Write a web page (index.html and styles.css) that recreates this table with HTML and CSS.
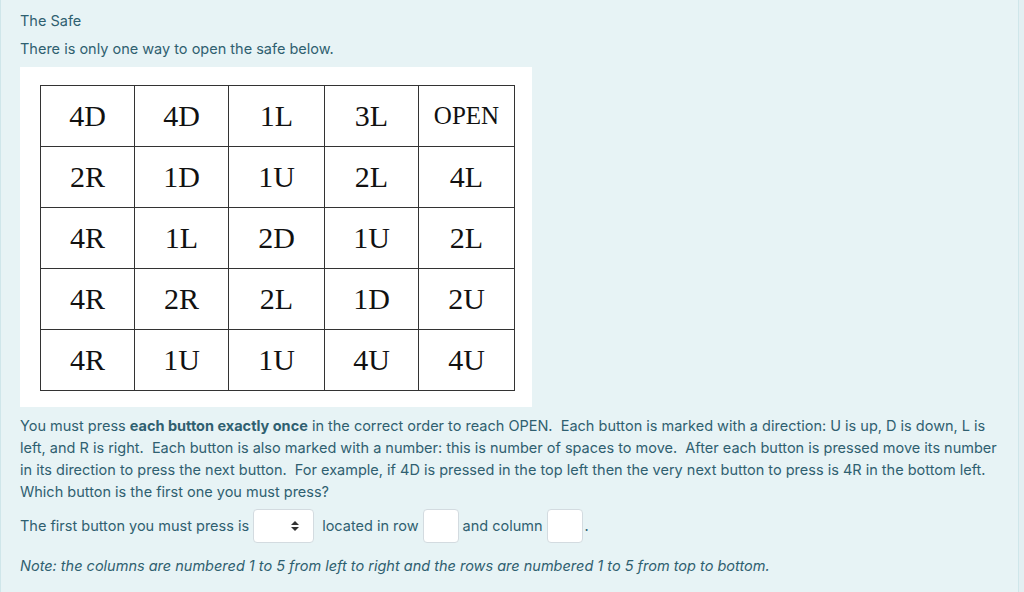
FILE: index.html
```html
<!DOCTYPE html>
<html>
<head>
<meta charset="utf-8">
<link rel="stylesheet" href="styles.css">
</head>
<body>
<div class="formulation">
  <p class="title">The Safe</p>
  <p class="intro">There is only one way to open the safe below.</p>
  <div class="picture">
    <table class="safe">
      <tr><td>4D</td><td>4D</td><td class="wide">1L</td><td>3L</td><td class="wide open">OPEN</td></tr>
      <tr><td>2R</td><td>1D</td><td class="wide">1U</td><td>2L</td><td class="wide">4L</td></tr>
      <tr><td>4R</td><td>1L</td><td class="wide">2D</td><td>1U</td><td class="wide">2L</td></tr>
      <tr><td>4R</td><td>2R</td><td class="wide">2L</td><td>1D</td><td class="wide">2U</td></tr>
      <tr><td>4R</td><td>1U</td><td class="wide">1U</td><td>4U</td><td class="wide">4U</td></tr>
    </table>
  </div>
  <p class="para">You must press <strong>each button exactly once</strong> in the correct order to reach OPEN.&nbsp; Each button is marked with a direction: U is up, D is down, L is left, and R is right.&nbsp; Each button is also marked with a number: this is number of spaces to move.&nbsp; After each button is pressed move its number in its direction to press the next button.&nbsp; For example, if 4D is pressed in the top left then the very next button to press is 4R in the bottom left.&nbsp; Which button is the first one you must press?</p>
  <div class="answer">
    <span>The first button you must press is</span>
    <span class="select"><span class="arrows"><span class="up"></span><span class="down"></span></span></span>
    <span>located in row</span>
    <span class="box"></span>
    <span>and column</span>
    <span class="box"></span><span class="dot">.</span>
  </div>
  <p class="note">Note: the columns are numbered 1 to 5 from left to right and the rows are numbered 1 to 5 from top to bottom.</p>
</div>
</body>
</html>
```
FILE: styles.css
```css
html, body {
  margin: 0;
  padding: 0;
}
body {
  background: #e3eff2;
  width: 1024px;
  height: 592px;
  overflow: hidden;
}
.formulation {
  width: 1019px;
  height: 592px;
  box-sizing: border-box;
  background: #e7f3f5;
  border-left: 1px solid #cfe6ea;
  border-right: 1px solid #cfe6ea;
  padding: 10px 0 0 19px;
  color: #2f6070;
  font-family: Inter, "Open Sans", sans-serif;
  font-size: 14.5px;
  line-height: 22px;
}
p {
  margin: 0;
}
.title {
  margin-bottom: 6px;
}
.intro {
  margin-bottom: 7px;
}
.picture {
  width: 512px;
  height: 340px;
  background: #fff;
  box-sizing: border-box;
  padding: 18px 0 0 20px;
}
.safe {
  border-collapse: collapse;
  table-layout: fixed;
  font-family: "Liberation Serif", "Times New Roman", serif;
  font-size: 30px;
  color: #111;
}
.safe td {
  border: 1.5px solid #333;
  width: 93px;
  height: 60px;
  padding: 0;
  text-align: center;
  vertical-align: middle;
}
.safe td.wide {
  width: 95px;
}
.safe td.open {
  font-size: 25px;
}
.para {
  margin-top: 8px;
  width: 985px;
}
strong {
  font-weight: 700;
}
.answer {
  display: flex;
  align-items: center;
  gap: 4px;
  margin-top: 6px;
  height: 34px;
}
.select {
  width: 61px;
  height: 34px;
  background: #fff;
  border: 1px solid #d3dbe0;
  border-radius: 4px;
  display: flex;
  align-items: center;
  justify-content: flex-end;
  padding-right: 14px;
  box-sizing: border-box;
  margin-right: 4px;
}
.arrows {
  display: flex;
  flex-direction: column;
  gap: 2px;
}
.up {
  width: 0;
  height: 0;
  border-left: 4px solid transparent;
  border-right: 4px solid transparent;
  border-bottom: 4px solid #333;
}
.down {
  width: 0;
  height: 0;
  border-left: 4px solid transparent;
  border-right: 4px solid transparent;
  border-top: 4px solid #333;
}
.box {
  width: 36px;
  height: 34px;
  box-sizing: border-box;
  background: #fff;
  border: 1px solid #d3dbe0;
  border-radius: 4px;
}
.dot {
  margin-left: -2px;
}
.note {
  margin-top: 12px;
  font-style: italic;
}
```
